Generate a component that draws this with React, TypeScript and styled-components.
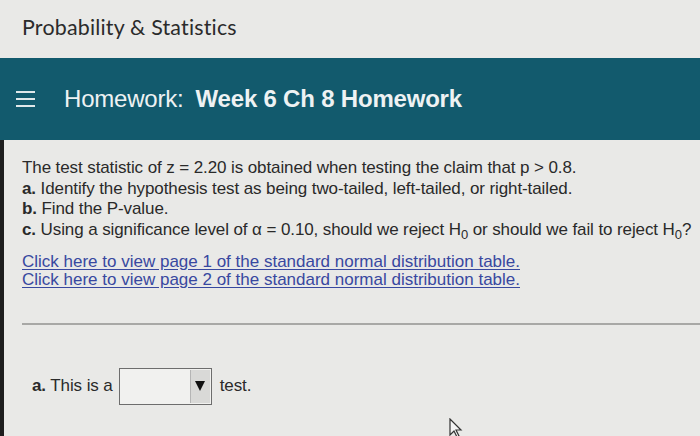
import React from 'react';
import styled, { createGlobalStyle } from 'styled-components';

const GlobalStyle = createGlobalStyle`
  html, body {
    margin: 0;
    padding: 0;
    background: #e8e8e6;
  }
`;

const Page = styled.div`
  position: relative;
  width: 700px;
  height: 436px;
  overflow: hidden;
  background: #e9e9e7;
  display: flex;
  flex-direction: column;
`;

const CourseBar = styled.div`
  height: 58px;
  display: flex;
  align-items: center;
  padding: 0 0 4px 22px;
  box-sizing: border-box;
  font-family: 'Lato', 'Noto Sans', sans-serif;
  font-size: 21.4px;
  color: #2b2b2b;
  letter-spacing: 0.2px;
`;

const Header = styled.div`
  height: 82px;
  background: #125a6d;
  display: flex;
  align-items: center;
  padding-left: 16px;
  color: #eef2f3;
  font-family: 'Liberation Sans', Arial, sans-serif;
  font-size: 24px;
  letter-spacing: -0.2px;
`;

const Menu = styled.svg`
  width: 19px;
  height: 18px;
  margin-right: 29px;
`;

const HeaderLabel = styled.span`
  margin-right: 12px;
`;

const HeaderTitle = styled.span`
  font-weight: bold;
`;

const Content = styled.div`
  flex: 1;
  border-left: 4px solid #1e1e1e;
  padding: 18px 0 0 18px;
  font-family: 'Liberation Sans', Arial, sans-serif;
  font-size: 17px;
  color: #2a2a2a;
  letter-spacing: -0.1px;
`;

const Line = styled.div`
  line-height: 20.7px;
  white-space: nowrap;
`;

const Sub = styled.sub`
  font-size: 13px;
  vertical-align: -4px;
  line-height: 0;
`;

const Links = styled.div`
  margin-top: 12px;
`;

const Link = styled.a`
  display: block;
  line-height: 18.5px;
  color: #3848a0;
  letter-spacing: 0;
  text-decoration: underline;
  text-underline-offset: 2px;
  white-space: nowrap;
  cursor: pointer;
`;

const Divider = styled.hr`
  border: none;
  border-top: 2px solid #a8a8a6;
  margin: 33px 0 0 0;
`;

const AnswerRow = styled.div`
  display: flex;
  align-items: center;
  margin-top: 43px;
  padding-left: 10px;
`;

const Select = styled.div`
  width: 89px;
  height: 33px;
  border: 1px solid #6d6d6d;
  background: #f1f1ef;
  margin: 0 8px 0 6px;
  display: flex;
  justify-content: flex-end;
  padding: 1px;
`;

const Arrow = styled.div`
  width: 19px;
  background: #d9d9d7;
  border-left: 1px solid #b5b5b5;
  display: flex;
  align-items: center;
  justify-content: center;

  &::after {
    content: '';
    border-left: 5px solid transparent;
    border-right: 5px solid transparent;
    border-top: 10px solid #111;
  }
`;

const Cursor = styled.svg`
  position: absolute;
  left: 449px;
  top: 418px;
  width: 14px;
  height: 20px;
`;

export default function App() {
  return (
    <Page>
      <GlobalStyle />
      <CourseBar>Probability &amp; Statistics</CourseBar>
      <Header>
        <Menu viewBox="0 0 19 18">
          <rect x="0" y="1" width="19" height="2" fill="#dfe8ea" />
          <rect x="0" y="8" width="19" height="2" fill="#dfe8ea" />
          <rect x="0" y="15" width="19" height="2" fill="#dfe8ea" />
        </Menu>
        <HeaderLabel>Homework:</HeaderLabel>
        <HeaderTitle>Week 6 Ch 8 Homework</HeaderTitle>
      </Header>
      <Content>
        <Line>The test statistic of z = 2.20 is obtained when testing the claim that p &gt; 0.8.</Line>
        <Line>
          <b>a.</b> Identify the hypothesis test as being two-tailed, left-tailed, or right-tailed.
        </Line>
        <Line>
          <b>b.</b> Find the P-value.
        </Line>
        <Line>
          <b>c.</b> Using a significance level of α = 0.10, should we reject H<Sub>0</Sub> or should we fail to reject H<Sub>0</Sub>?
        </Line>
        <Links>
          <Link>Click here to view page 1 of the standard normal distribution table.</Link>
          <Link>Click here to view page 2 of the standard normal distribution table.</Link>
        </Links>
        <Divider />
        <AnswerRow>
          <span>
            <b>a.</b> This is a
          </span>
          <Select>
            <Arrow />
          </Select>
          <span>test.</span>
        </AnswerRow>
      </Content>
      <Cursor viewBox="0 0 14 20">
        <path d="M1 1 L1 17 L5 13 L8 19 L10 18 L7 12 L12 12 Z" fill="#f4f4f4" stroke="#333" strokeWidth="1.2" />
      </Cursor>
    </Page>
  );
}
